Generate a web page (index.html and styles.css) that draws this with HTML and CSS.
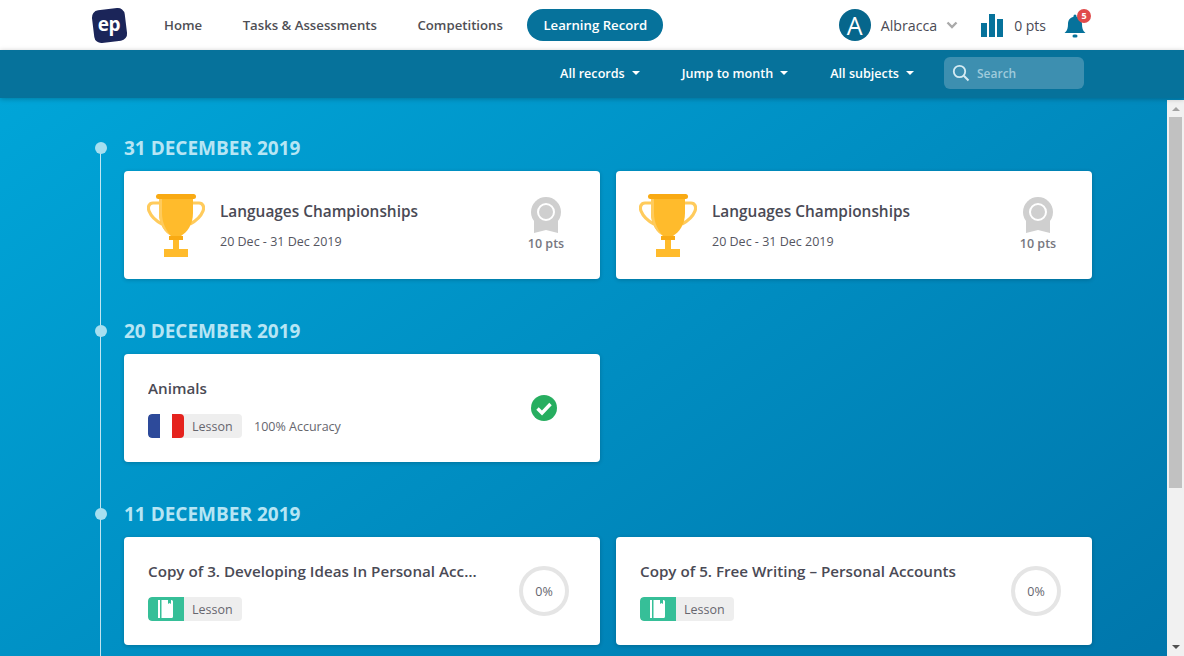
FILE: index.html
```html
<!DOCTYPE html>
<html lang="en">

<head>
    <meta charset="UTF-8">
    <meta name="viewport" content="width=device-width, initial-scale=1.0">
    <title>Learning Record</title>
    <link rel="stylesheet" href="styles.css">
</head>

<body>
    <div class="topbar">
        <div class="logo"><span>ep</span></div>
        <div class="nav">
            <a class="nav-item">Home</a>
            <a class="nav-item">Tasks &amp; Assessments</a>
            <a class="nav-item">Competitions</a>
            <a class="nav-item active">Learning Record</a>
        </div>
        <div class="user">
            <div class="avatar">A</div>
            <span class="user-name">Albracca</span>
            <svg class="chevron" width="12" height="8" viewBox="0 0 12 8"><path d="M1.5 1.5 6 6l4.5-4.5" fill="none" stroke="#aaa" stroke-width="2.4"/></svg>
            <svg class="bars" width="22" height="23" viewBox="0 0 22 23"><rect x="0" y="9" width="6" height="14" fill="#06729b"/><rect x="8" y="0" width="6" height="23" fill="#06729b"/><rect x="16" y="5" width="6" height="18" fill="#06729b"/></svg>
            <span class="points">0 pts</span>
            <div class="bell">
                <svg width="22" height="25" viewBox="0 0 22 25"><path d="M11 1.5a1.5 1.5 0 0 1 1.5 1.5v.7c3.500.8 5.500 3.700 5.500 7.300 0 3.500.7 6 2 7.500l1.500 1.500H.5L2 18.500c1.300-1.500 2-4 2-7.500 0-3.600 2-6.500 5.500-7.300V3A1.500 1.500 0 0 1 11 1.500z" fill="#06729b"/><rect x="8.500" y="21.500" width="5" height="3" rx="1.500" fill="#06729b"/></svg>
                <span class="badge">5</span>
            </div>
        </div>
    </div>

    <div class="filterbar">
        <a class="filter">All records<i class="caret"></i></a>
        <a class="filter">Jump to month<i class="caret"></i></a>
        <a class="filter">All subjects<i class="caret"></i></a>
        <div class="search">
            <svg width="18" height="18" viewBox="0 0 18 18"><circle cx="7.500" cy="7.500" r="5.700" fill="none" stroke="#d5ebf3" stroke-width="1.800"/><path d="M11.800 11.800 16.500 16.500" stroke="#d5ebf3" stroke-width="2"/></svg>
            <span>Search</span>
        </div>
    </div>

    <div class="page">
        <div class="content">
            <div class="timeline">
                <div class="day">
                    <h2 class="day-title">31 December 2019</h2>
                    <div class="cards">
                        <div class="card">
                            <svg class="trophy" width="58" height="65" viewBox="0 0 58 65">
                                <path d="M13 10H6C2 10 .5 14 2 18c2 5 7 10 13 13M45 10h7c4 0 5.500 4 4 8-2 5-7 10-13 13" fill="none" stroke="#ffcb5c" stroke-width="3.200"/>
                                <path d="M12 6h34v14c0 12-6 19-12 23H24C18 39 12 32 12 20z" fill="#ffbb2c"/>
                                <path d="M12 6h3v14c0 10 4 17 9 23C18 39 12 32 12 20z" fill="#ffcb5c"/>
                                <rect x="9" y="1" width="40" height="5" rx="2.500" fill="#f9aa13"/>
                                <rect x="22" y="43" width="14" height="4" fill="#f9aa13"/>
                                <rect x="26" y="47" width="6" height="9" fill="#ffbb2c"/>
                                <rect x="17" y="56" width="24" height="8" fill="#ffbb2c"/>
                            </svg>
                            <div class="card-body">
                                <div class="card-title">Languages Championships</div>
                                <div class="card-date">20 Dec - 31 Dec 2019</div>
                            </div>
                            <div class="reward">
                                <svg width="30" height="36" viewBox="0 0 30 36"><circle cx="15" cy="15" r="15" fill="#cfcfcf"/><path d="M3 22h24v14l-12-3-12 3z" fill="#cfcfcf"/><circle cx="15" cy="15" r="8" fill="none" stroke="#fff" stroke-width="2"/></svg>
                                <span>10 pts</span>
                            </div>
                        </div>
                        <div class="card">
                            <svg class="trophy" width="58" height="65" viewBox="0 0 58 65">
                                <path d="M13 10H6C2 10 .5 14 2 18c2 5 7 10 13 13M45 10h7c4 0 5.500 4 4 8-2 5-7 10-13 13" fill="none" stroke="#ffcb5c" stroke-width="3.200"/>
                                <path d="M12 6h34v14c0 12-6 19-12 23H24C18 39 12 32 12 20z" fill="#ffbb2c"/>
                                <path d="M12 6h3v14c0 10 4 17 9 23C18 39 12 32 12 20z" fill="#ffcb5c"/>
                                <rect x="9" y="1" width="40" height="5" rx="2.500" fill="#f9aa13"/>
                                <rect x="22" y="43" width="14" height="4" fill="#f9aa13"/>
                                <rect x="26" y="47" width="6" height="9" fill="#ffbb2c"/>
                                <rect x="17" y="56" width="24" height="8" fill="#ffbb2c"/>
                            </svg>
                            <div class="card-body">
                                <div class="card-title">Languages Championships</div>
                                <div class="card-date">20 Dec - 31 Dec 2019</div>
                            </div>
                            <div class="reward">
                                <svg width="30" height="36" viewBox="0 0 30 36"><circle cx="15" cy="15" r="15" fill="#cfcfcf"/><path d="M3 22h24v14l-12-3-12 3z" fill="#cfcfcf"/><circle cx="15" cy="15" r="8" fill="none" stroke="#fff" stroke-width="2"/></svg>
                                <span>10 pts</span>
                            </div>
                        </div>
                    </div>
                </div>

                <div class="day">
                    <h2 class="day-title">20 December 2019</h2>
                    <div class="cards">
                        <div class="card">
                            <div class="card-body lesson-body">
                                <div class="card-title lesson-title">Animals</div>
                                <div class="tags">
                                    <div class="tag">
                                        <div class="flag"><i class="blue"></i><i class="white"></i><i class="red"></i></div>
                                        <span>Lesson</span>
                                    </div>
                                    <span class="accuracy">100% Accuracy</span>
                                </div>
                            </div>
                            <svg class="check" width="26" height="26" viewBox="0 0 26 26"><circle cx="13" cy="13" r="13" fill="#27ae60"/><path d="M6.500 13.500 11 18l8.500-9" fill="none" stroke="#fff" stroke-width="3.400"/></svg>
                        </div>
                    </div>
                </div>

                <div class="day">
                    <h2 class="day-title">11 December 2019</h2>
                    <div class="cards">
                        <div class="card">
                            <div class="card-body lesson-body">
                                <div class="card-title lesson-title">Copy of 3. Developing Ideas In Personal Accounts</div>
                                <div class="tags">
                                    <div class="tag">
                                        <div class="tag-icon">
                                            <svg width="16" height="18" viewBox="0 0 16 18"><rect x="0" y="0" width="2" height="18" fill="#fff"/><path d="M3.500 0H10v4l1.500-1 1.500 1V0h.5A1.500 1.500 0 0 1 15 1.500v15a1.500 1.500 0 0 1-1.500 1.500h-10z" fill="#fff"/></svg>
                                        </div>
                                        <span>Lesson</span>
                                    </div>
                                </div>
                            </div>
                            <div class="ring">0%</div>
                        </div>
                        <div class="card">
                            <div class="card-body lesson-body">
                                <div class="card-title lesson-title">Copy of 5. Free Writing – Personal Accounts</div>
                                <div class="tags">
                                    <div class="tag">
                                        <div class="tag-icon">
                                            <svg width="16" height="18" viewBox="0 0 16 18"><rect x="0" y="0" width="2" height="18" fill="#fff"/><path d="M3.500 0H10v4l1.500-1 1.500 1V0h.5A1.500 1.500 0 0 1 15 1.500v15a1.500 1.500 0 0 1-1.500 1.500h-10z" fill="#fff"/></svg>
                                        </div>
                                        <span>Lesson</span>
                                    </div>
                                </div>
                            </div>
                            <div class="ring">0%</div>
                        </div>
                    </div>
                </div>
            </div>
        </div>
        <div class="scrollbar">
            <i class="arrow-up"></i>
            <div class="thumb"></div>
            <i class="arrow-down"></i>
        </div>
    </div>
</body>

</html>
```

FILE: styles.css
```css
* {
    box-sizing: border-box;
}

html,
body {
    height: 100%;
}

body {
    font-family: "Open Sans", Arial, sans-serif;
    margin: 0;
    display: flex;
    flex-direction: column;
    height: 100vh;
    overflow: hidden;
    color: #4a4a55;
}

/* top navigation */
.topbar {
    height: 50px;
    flex-shrink: 0;
    background-color: #fff;
    display: flex;
    align-items: center;
    padding-left: 92px;
    padding-right: 98px;
}

.logo {
    width: 33px;
    height: 33px;
    margin-left: 1px;
    margin-right: 22px;
    background-color: #1b2559;
    border-radius: 7px;
    transform: rotate(-7deg);
    color: #fff;
    display: flex;
    align-items: center;
    justify-content: center;
}

.logo span {
    font-size: 19px;
    font-weight: 700;
    letter-spacing: -0.5px;
    transform: rotate(7deg);
    margin-top: -3px;
}

.nav {
    display: flex;
    gap: 8.5px;
}

.nav-item {
    height: 32px;
    line-height: 32px;
    padding: 0 16px;
    font-size: 13.2px;
    font-weight: 600;
    color: #4f4f55;
    border-radius: 16px;
}

.nav-item.active {
    background-color: #06729b;
    color: #fff;
}

.user {
    margin-left: auto;
    display: flex;
    align-items: center;
}

.avatar {
    width: 32px;
    height: 32px;
    border-radius: 50%;
    background-color: #06668c;
    color: #fff;
    font-size: 25px;
    line-height: 32px;
    text-align: center;
}

.user-name {
    margin-left: 10px;
    font-size: 14.2px;
}

.chevron {
    margin-left: 9px;
}

.bars {
    margin-left: 23px;
}

.points {
    margin-left: 11px;
    font-size: 14px;
}

.bell {
    position: relative;
    margin-left: 18px;
    height: 25px;
}

.badge {
    position: absolute;
    top: -4px;
    right: -5px;
    width: 14px;
    height: 14px;
    border-radius: 50%;
    background-color: #e04b4b;
    color: #fff;
    font-size: 9px;
    font-weight: 700;
    line-height: 14px;
    text-align: center;
}

/* filters */
.filterbar {
    height: 48px;
    flex-shrink: 0;
    background-color: #06729b;
    display: flex;
    align-items: center;
    justify-content: flex-end;
    gap: 42px;
    padding-right: 100px;
    padding-bottom: 2px;
    box-shadow: 0 1px 5px rgba(0, 0, 0, 0.25);
    position: relative;
    z-index: 2;
}

.filter {
    color: #fff;
    font-size: 12.6px;
    font-weight: 600;
    display: flex;
    align-items: center;
}

.caret {
    width: 0;
    height: 0;
    margin-left: 7px;
    border-left: 4px solid transparent;
    border-right: 4px solid transparent;
    border-top: 4px solid #fff;
}

.search {
    width: 140px;
    height: 32px;
    margin-left: -12px;
    border-radius: 6px;
    background-color: #3d8fb0;
    display: flex;
    align-items: center;
    gap: 7px;
    padding-left: 8px;
    color: #9fcbdc;
    font-size: 12px;
    font-weight: 600;
}

/* page body */
.page {
    flex-grow: 1;
    min-height: 0;
    display: flex;
    background: linear-gradient(145deg, #00a5d8, #0076ab);
}

.content {
    flex-grow: 1;
    min-width: 0;
    overflow: hidden;
    padding-top: 50px;
}

.timeline {
    display: flow-root;
    margin-left: 100px;
    width: 992px;
    padding-left: 25px;
    padding-bottom: 60px;
    border-left: 1px solid rgba(255, 255, 255, 0.75);
}

.day {
    margin-bottom: 52px;
}

.day-title {
    position: relative;
    margin: -12px 0 11px -2px;
    height: 24px;
    line-height: 24px;
    font-size: 19px;
    font-weight: 700;
    color: #b6e5f4;
    text-transform: uppercase;
}

.day-title::before {
    content: "";
    position: absolute;
    left: -29px;
    top: 6px;
    width: 12px;
    height: 12px;
    border-radius: 50%;
    background-color: #a6dff0;
}

.cards {
    display: flex;
    gap: 16px;
    margin-left: -2px;
}

.card {
    width: 476px;
    height: 108px;
    background-color: #fff;
    border-radius: 4px;
    box-shadow: 0 1px 4px rgba(0, 0, 0, 0.2);
    padding-left: 23px;
    display: flex;
    align-items: center;
}

.trophy {
    flex-shrink: 0;
    margin-right: 15px;
}

.card-body {
    flex-grow: 1;
    min-width: 0;
}

.card-title {
    font-size: 15.4px;
    font-weight: 600;
    color: #4a4a55;
    white-space: nowrap;
    overflow: hidden;
    text-overflow: ellipsis;
}

.lesson-title {
    font-size: 15.2px;
}

.card-date {
    margin-top: 11px;
    font-size: 12.5px;
    color: #55555f;
}

.reward {
    flex-shrink: 0;
    width: 60px;
    margin-top: -2px;
    margin-right: 24px;
    display: flex;
    flex-direction: column;
    align-items: center;
    gap: 2px;
    color: #77777f;
    font-size: 12.5px;
    font-weight: 600;
}

.lesson-body {
    padding-left: 1px;
    padding-right: 35px;
}

.tags {
    margin-top: 16px;
    display: flex;
    align-items: center;
}

.tag {
    display: flex;
    align-items: center;
    height: 24px;
    width: 94px;
    background-color: #eee;
    border-radius: 4px;
    color: #66666e;
    font-size: 12.5px;
    overflow: hidden;
}

.tag span {
    margin-left: 8px;
}

.flag {
    width: 36px;
    height: 24px;
    display: flex;
    flex-shrink: 0;
    border-radius: 4px;
    overflow: hidden;
}

.flag i {
    flex: 1;
}

.flag .blue {
    background-color: #2d4a9a;
}

.flag .white {
    background-color: #fff;
}

.flag .red {
    background-color: #e5231e;
}

.tag-icon {
    width: 36px;
    height: 24px;
    flex-shrink: 0;
    background-color: #36bf98;
    border-radius: 4px 0 0 4px;
    display: flex;
    align-items: center;
    justify-content: center;
}

.accuracy {
    margin-left: 12px;
    font-size: 12.5px;
    color: #66666e;
}

.check {
    flex-shrink: 0;
    margin-right: 43px;
}

.ring {
    flex-shrink: 0;
    width: 50px;
    height: 50px;
    margin-right: 31px;
    border: 4px solid #e5e5e5;
    border-radius: 50%;
    font-size: 12.5px;
    line-height: 43px;
    text-align: center;
    color: #66666e;
}

/* scrollbar */
.scrollbar {
    width: 17px;
    flex-shrink: 0;
    background-color: #f1f1f1;
    margin-top: 2px;
    display: flex;
    flex-direction: column;
    align-items: center;
    position: relative;
    z-index: 1;
}

.arrow-up {
    margin-top: 7px;
    width: 0;
    height: 0;
    border-left: 4px solid transparent;
    border-right: 4px solid transparent;
    border-bottom: 4px solid #a3a3a3;
}

.thumb {
    margin-top: 6px;
    width: 13px;
    height: 371px;
    background-color: #c1c1c1;
}

.arrow-down {
    margin-top: auto;
    margin-bottom: 7px;
    width: 0;
    height: 0;
    border-left: 4px solid transparent;
    border-right: 4px solid transparent;
    border-top: 4px solid #505050;
}
```
